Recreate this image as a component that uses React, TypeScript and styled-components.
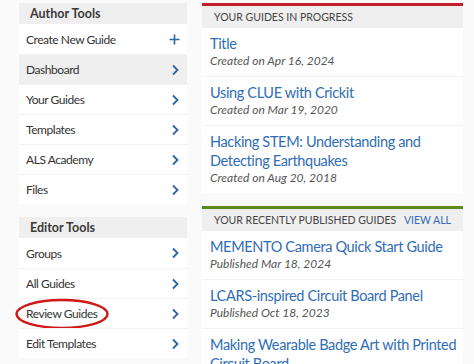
import React from 'react';
import styled, { createGlobalStyle } from 'styled-components';

const GlobalStyle = createGlobalStyle`
  html, body {
    margin: 0;
    padding: 0;
    background: #fafafa;
    font-family: Lato, "Liberation Sans", sans-serif;
    overflow: hidden;
  }
`;

const Page = styled.div`
  display: flex;
  align-items: flex-start;
  gap: 15px;
  padding: 3px 0 0 19px;
  width: 474px;
  height: 364px;
  box-sizing: border-box;
  overflow: hidden;
`;

const Sidebar = styled.div`
  width: 168px;
  display: flex;
  flex-direction: column;
  gap: 13px;
`;

const ToolCard = styled.div`
  background: #fff;
`;

const ToolHeader = styled.div`
  height: 21px;
  background: #efefef;
  display: flex;
  align-items: center;
  padding-left: 11px;
  font-size: 12.5px;
  font-weight: 700;
  color: #3a3a3a;
`;

const ToolRow = styled.div<{ $active?: boolean }>`
  position: relative;
  height: 30px;
  display: flex;
  align-items: center;
  justify-content: space-between;
  padding: 0 7px;
  font-size: 12px;
  letter-spacing: -0.45px;
  color: #333;
  background: ${p => (p.$active ? '#efefef' : '#fff')};
  border-top: 1px solid #f3f3f3;
  box-sizing: border-box;
  &:first-of-type {
    border-top: none;
  }
`;

const Circle = styled.svg`
  position: absolute;
  left: -4px;
  top: -1px;
  pointer-events: none;
`;

const Main = styled.div`
  width: 261px;
  display: flex;
  flex-direction: column;
  gap: 13px;
`;

const GuideCard = styled.div<{ $accent: string }>`
  background: #fff;
  border-top: 3px solid ${p => p.$accent};
`;

const GuideHeader = styled.div`
  height: 22px;
  background: #efefef;
  display: flex;
  align-items: center;
  justify-content: space-between;
  padding: 0 12px;
  font-size: 10.5px;
  text-transform: uppercase;
  color: #444;
  white-space: nowrap;
`;

const ViewAll = styled.span`
  color: #2f6db5;
`;

const GuideItem = styled.div`
  padding: 6px 1px 7px 8px;
  border-top: 1px solid #f2f2f2;
  &:first-of-type {
    border-top: none;
  }
`;

const GuideTitle = styled.div`
  font-size: 14.5px;
  line-height: 19px;
  letter-spacing: -0.35px;
  color: #2f6db5;
`;

const GuideDate = styled.div`
  font-size: 12px;
  line-height: 16px;
  font-style: italic;
  color: #555;
`;

const Chevron = () => (
  <svg width="9" height="12" viewBox="0 0 9 12">
    <path d="M2 1.5 L6.5 6 L2 10.5" fill="none" stroke="#2c64a8" strokeWidth="1.8" />
  </svg>
);

const Plus = () => (
  <svg width="11" height="11" viewBox="0 0 11 11">
    <path d="M5.5 0.5 V10.5 M0.5 5.5 H10.5" stroke="#2c64a8" strokeWidth="1.6" />
  </svg>
);

const authorTools = ['Dashboard', 'Your Guides', 'Templates', 'ALS Academy', 'Files'];
const editorTools = ['Groups', 'All Guides', 'Review Guides', 'Edit Templates'];

const inProgress = [
  { title: 'Title', date: 'Created on Apr 16, 2024' },
  { title: 'Using CLUE with Crickit', date: 'Created on Mar 19, 2020' },
  { title: 'Hacking STEM: Understanding and Detecting Earthquakes', date: 'Created on Aug 20, 2018' },
];

const published = [
  { title: 'MEMENTO Camera Quick Start Guide', date: 'Published Mar 18, 2024' },
  { title: 'LCARS-inspired Circuit Board Panel', date: 'Published Oct 18, 2023' },
  { title: 'Making Wearable Badge Art with Printed Circuit Board', date: 'Published Sep 12, 2023' },
];

export default function App() {
  return (
    <>
      <GlobalStyle />
      <Page>
        <Sidebar>
          <ToolCard>
            <ToolHeader>Author Tools</ToolHeader>
            <div>
              <ToolRow>
                Create New Guide
                <Plus />
              </ToolRow>
              {authorTools.map(t => (
                <ToolRow key={t} $active={t === 'Dashboard'}>
                  {t}
                  <Chevron />
                </ToolRow>
              ))}
            </div>
          </ToolCard>
          <ToolCard>
            <ToolHeader>Editor Tools</ToolHeader>
            <div>
              {editorTools.map(t => (
                <ToolRow key={t}>
                  {t}
                  <Chevron />
                  {t === 'Review Guides' && (
                    <Circle width="96" height="32" viewBox="0 0 96 32">
                      <ellipse cx="47" cy="16" rx="45.5" ry="14" fill="none" stroke="#d01818" strokeWidth="2.5" />
                    </Circle>
                  )}
                </ToolRow>
              ))}
            </div>
          </ToolCard>
        </Sidebar>
        <Main>
          <GuideCard $accent="#c41e2e">
            <GuideHeader>Your Guides in Progress</GuideHeader>
            <div>
              {inProgress.map(g => (
                <GuideItem key={g.title}>
                  <GuideTitle>{g.title}</GuideTitle>
                  <GuideDate>{g.date}</GuideDate>
                </GuideItem>
              ))}
            </div>
          </GuideCard>
          <GuideCard $accent="#5a8a1c">
            <GuideHeader>
              Your Recently Published Guides
              <ViewAll>View All</ViewAll>
            </GuideHeader>
            <div>
              {published.map(g => (
                <GuideItem key={g.title}>
                  <GuideTitle>{g.title}</GuideTitle>
                  <GuideDate>{g.date}</GuideDate>
                </GuideItem>
              ))}
            </div>
          </GuideCard>
        </Main>
      </Page>
    </>
  );
}
